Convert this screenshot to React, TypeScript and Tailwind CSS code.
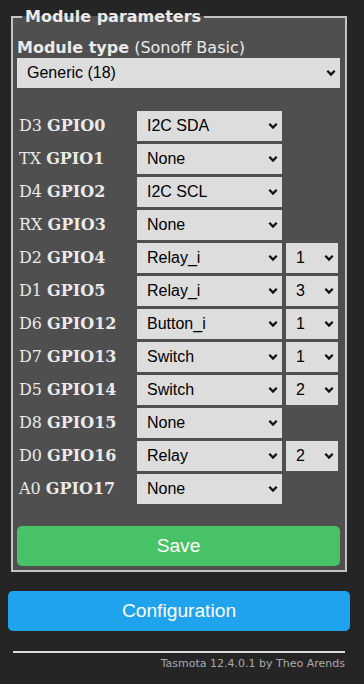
import React from 'react';

type Row = { pin: string; gpio: string; fn: string; idx?: string };

const ROWS: Row[] = [
  { pin: 'D3', gpio: 'GPIO0', fn: 'I2C SDA' },
  { pin: 'TX', gpio: 'GPIO1', fn: 'None' },
  { pin: 'D4', gpio: 'GPIO2', fn: 'I2C SCL' },
  { pin: 'RX', gpio: 'GPIO3', fn: 'None' },
  { pin: 'D2', gpio: 'GPIO4', fn: 'Relay_i', idx: '1' },
  { pin: 'D1', gpio: 'GPIO5', fn: 'Relay_i', idx: '3' },
  { pin: 'D6', gpio: 'GPIO12', fn: 'Button_i', idx: '1' },
  { pin: 'D7', gpio: 'GPIO13', fn: 'Switch', idx: '1' },
  { pin: 'D5', gpio: 'GPIO14', fn: 'Switch', idx: '2' },
  { pin: 'D8', gpio: 'GPIO15', fn: 'None' },
  { pin: 'D0', gpio: 'GPIO16', fn: 'Relay', idx: '2' },
  { pin: 'A0', gpio: 'GPIO17', fn: 'None' },
];

function Chevron() {
  return (
    <svg width="10" height="7" viewBox="0 0 10 7" className="absolute right-[4px] top-1/2 -translate-y-1/2 pointer-events-none">
      <path d="M1.3 1.3 L5 5 L8.7 1.3" fill="none" stroke="#111" strokeWidth="2.3" />
    </svg>
  );
}

function FakeSelect({ value, className = '' }: { value: string; className?: string }) {
  return (
    <div className={`relative h-[30px] bg-[#dddddd] text-black text-[16px] leading-[30px] pl-[10px] pr-[18px] font-['Liberation_Sans',Arial,sans-serif] ${className}`}>
      <span className="whitespace-nowrap">{value}</span>
      <Chevron />
    </div>
  );
}

export default function App() {
  return (
    <div className="min-h-[684px] bg-[#252525] text-[#eaeaea] font-['DejaVu_Sans',Verdana,sans-serif]">
      <div className="w-[342px] ml-[8px] pt-[7px]">
        <fieldset className="mx-[3px] border-2 border-[#c3c3c3] bg-[#4f4f4f] px-[4px] pb-[4px]">
          <legend className="ml-[5px] px-[3px] text-[16px] font-bold leading-[19px]">Module parameters</legend>

          <div className="mt-[12px] text-[16px] leading-[19px]">
            <b>Module type</b> (Sonoff Basic)
          </div>
          <FakeSelect value="Generic (18)" className="mt-[1px] w-[323px]" />

          <div className="mt-[23px] grid grid-cols-[116px_145px_52px] gap-x-[4px] gap-y-[3px]">
            {ROWS.map(r => (
              <React.Fragment key={r.gpio}>
                <div className="h-[30px] flex items-center pl-[2px] text-[16px] whitespace-nowrap font-['DejaVu_Serif',Georgia,serif]">
                  {r.pin}&nbsp;<b>{r.gpio}</b>
                </div>
                <FakeSelect value={r.fn} />
                {r.idx ? <FakeSelect value={r.idx} /> : <div />}
              </React.Fragment>
            ))}
          </div>

          <button className="mt-[22px] w-[323px] h-[40px] rounded-[5px] bg-[#47c266] text-white text-[19.2px] font-['Liberation_Sans',Arial,sans-serif]">
            Save
          </button>
        </fieldset>

        <button className="mt-[19px] w-[342px] h-[40px] rounded-[5px] bg-[#1fa3ec] text-white text-[19.2px] font-['Liberation_Sans',Arial,sans-serif]">
          Configuration
        </button>

        <div className="mt-[20px] mx-[5px] h-[2px] bg-[#dddddd]" />
        <div className="mt-[3px] pr-[5px] text-right text-[11px] leading-[16px] text-[#aaaaaa]">
          Tasmota 12.4.0.1 by Theo Arends
        </div>
      </div>
    </div>
  );
}
